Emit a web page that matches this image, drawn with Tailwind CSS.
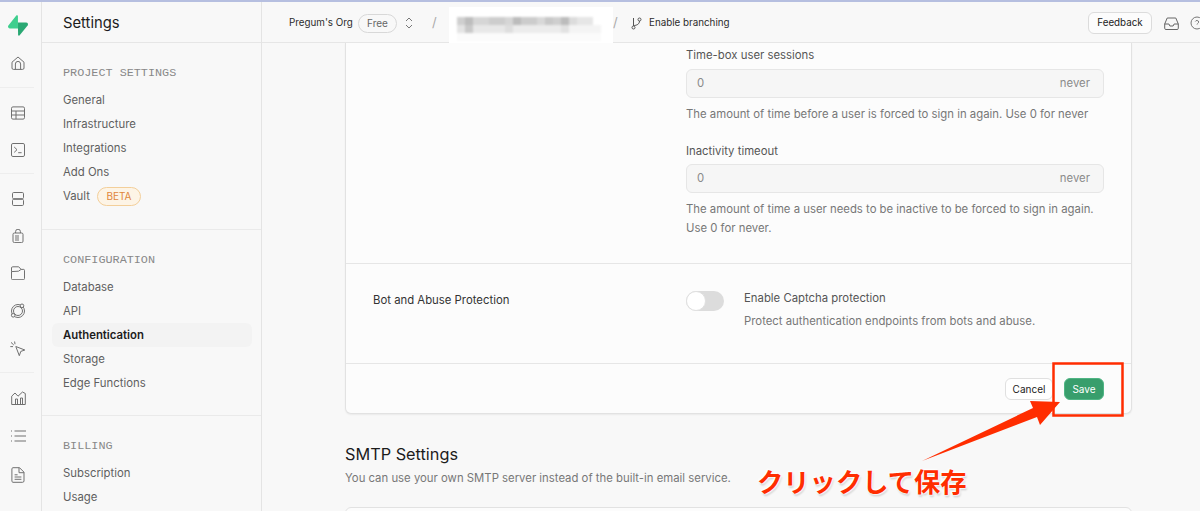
<!doctype html>
<html lang="en">
<head>
<meta charset="utf-8">
<script src="https://cdn.jsdelivr.net/npm/@tailwindcss/browser@4"></script>
<title>Settings</title>
</head>
<body class="bg-[#f8f8f8]">
<div class="relative h-[511px] w-[1200px] overflow-hidden flex flex-col bg-[#f8f8f8] font-['Inter','Liberation_Sans',sans-serif] text-[11.35px] text-[#5f5f5f]">
  <div class="h-[2px] shrink-0 bg-[#b6bfe0]"></div>
  <div class="flex flex-1 min-h-0">
    <!-- rail -->
    <aside class="w-[42px] shrink-0 border-r border-[#e4e4e4] flex flex-col text-[#707070]">
      <div class="h-[86px] pt-[13px] pl-[8px] border-b border-[#eeeeee] mr-[7px]">
        <svg class="w-[20px] h-[21px]" viewBox="0 0 109 113" fill="none"><path d="M63.7076 110.284C60.8481 113.885 55.0502 111.912 54.9813 107.314L53.9738 40.0627L99.1935 40.0627C107.384 40.0627 111.952 49.5228 106.859 55.9374L63.7076 110.284Z" fill="#2aa873"/><path d="M45.317 2.07103C48.1765 -1.53037 53.9745 0.442937 54.0434 5.041L54.4849 72.2922H9.83113C1.64038 72.2922 -2.92775 62.8321 2.1655 56.4175L45.317 2.07103Z" fill="#3ecf8e"/></svg>
        <svg class="w-[14px] h-[14px] mt-[20px] ml-[3px]" viewBox="0 0 14 14" fill="none" stroke="currentColor" stroke-width="1"><path d="M1 6.2 7 1l6 5.2V12a1.4 1.4 0 0 1-1.4 1.4H2.4A1.4 1.4 0 0 1 1 12Z"/><path d="M4.4 13.4V8a2.6 2.6 0 0 1 5.2 0v5.4"/></svg>
      </div>
      <div class="h-[86px] border-b border-[#eeeeee] mr-[7px] pl-[11px] pt-[18px] flex flex-col gap-[23px]">
        <svg class="w-[14px] h-[14px]" viewBox="0 0 14 14" fill="none" stroke="currentColor" stroke-width="1"><rect x=".5" y=".9" width="13" height="12.2" rx="1.4"/><path d="M.5 5h13M.5 9h13M5 5v8.1"/></svg>
        <svg class="w-[14px] h-[14px]" viewBox="0 0 14 14" fill="none" stroke="currentColor" stroke-width="1"><rect x=".5" y=".5" width="13" height="13" rx="1.4"/><path d="m3.2 4 2.8 2.7-2.8 2.7M7.2 9.7h3.4"/></svg>
      </div>
      <div class="h-[199px] border-b border-[#eeeeee] mr-[7px] pl-[11px] pt-[18px] flex flex-col gap-[23px]">
        <svg class="w-[14px] h-[14px]" viewBox="0 0 14 14" fill="none" stroke="currentColor" stroke-width="1"><rect x="1.5" y=".5" width="11" height="6.2" rx="1.2"/><rect x="1.5" y="7.3" width="11" height="6.2" rx="1.2"/></svg>
        <svg class="w-[14px] h-[14px]" viewBox="0 0 14 14" fill="none" stroke="currentColor" stroke-width="1"><rect x="2" y="4" width="10" height="9.6" rx="1.4"/><path d="M4.6 4V2.6a2.4 2.4 0 0 1 4.8 0V4M4 7h4M4 9h4M4 11h4"/></svg>
        <svg class="w-[14px] h-[14px]" viewBox="0 0 14 14" fill="none" stroke="currentColor" stroke-width="1"><path d="M.5 5.6V2a1.2 1.2 0 0 1 1.2-1.2h6l2.4 2.6h2.7a.9.9 0 0 1 .7.9v8.2a1.2 1.2 0 0 1-1.2 1.2H1.700a1.200 1.200 0 0 1-1.200-1.200V5.600l7-.4 2.600-1.800"/></svg>
        <svg class="w-[16px] h-[16px] -ml-[1px]" viewBox="0 0 16 16" fill="none" stroke="currentColor" stroke-width="1"><circle cx="8" cy="8" r="6.500"/><circle cx="8" cy="8" r="4.500"/><circle cx="12" cy="2.800" r="1.800" fill="#f8f8f8"/><circle cx="3.200" cy="12.300" r="1.800" fill="#f8f8f8"/></svg>
        <svg class="w-[16px] h-[16px] -ml-[1px] -mt-[1px]" viewBox="0 0 16 16" fill="none" stroke="currentColor" stroke-width="1"><path d="m5.800 5.500 9 3.500-4 1.400-1.500 4.300ZM3.800 4 1 1.400M5 3.200 4.600.5M3 5.600H.3"/></svg>
      </div>
      <div class="pl-[11px] pt-[18px] flex flex-col gap-[25px]">
        <svg class="w-[15px] h-[14px]" viewBox="0 0 15 14" fill="none" stroke="currentColor" stroke-width="1"><path d="M.7 13.500V5.200L4 2l3 3.200L11.500 1l2.800 1.500v11ZM4.500 13.500V8h2v5.500M9.500 13.500V7h2v6.500"/></svg>
        <svg class="w-[15px] h-[12px]" viewBox="0 0 15 12" fill="none" stroke="currentColor" stroke-width="1"><path d="M3.500 1H15M3.500 6H15M3.500 11H15M0 1h1M0 6h1M0 11h1"/></svg>
        <svg class="w-[14px] h-[16px]" viewBox="0 0 14 16" fill="none" stroke="currentColor" stroke-width="1"><path d="M1.800.7h6.700l4.500 4.500v8.700a1.400 1.400 0 0 1-1.400 1.400H1.800A1.400 1.400 0 0 1 .9 13.900V2a1.400 1.400 0 0 1 .9-1.300ZM8 .7v5h5M3.600 7.800h3M3.600 10h6.800M3.600 12.300h6.800"/></svg>
      </div>
    </aside>

    <!-- sidebar -->
    <aside class="w-[220px] shrink-0 border-r border-[#e4e4e4] flex flex-col">
      <div class="h-[41px] shrink-0 border-b border-[#e6e6e6] pl-[21px] pt-[2px] flex items-center text-[14.800px] text-[#1c1c1c]">Settings</div>
      <div class="h-[187px] shrink-0 border-b border-[#eaeaea] pl-[21px] pt-[22px]">
        <h3 class="font-['Liberation_Mono',monospace] text-[11.800px] leading-[16px] text-[#888888]">PROJECT SETTINGS</h3>
        <ul class="mt-[7px] flex flex-col [&>li]:h-[24px] [&>li]:leading-[24px]">
          <li>General</li><li>Infrastructure</li><li>Integrations</li><li>Add Ons</li>
          <li class="flex items-center gap-[7px]">Vault <span class="h-[19px] w-[44px] rounded-full border border-[#f3cf9a] bg-[#fdf4e6] text-[#e0863a] text-[10px] leading-[17px] text-center">BETA</span></li>
        </ul>
      </div>
      <div class="h-[186px] shrink-0 border-b border-[#eaeaea] pl-[10px] pr-[9px] pt-[22px]">
        <h3 class="pl-[11px] font-['Liberation_Mono',monospace] text-[11.800px] leading-[16px] text-[#888888]">CONFIGURATION</h3>
        <ul class="mt-[7px] flex flex-col [&>li]:h-[24px] [&>li]:leading-[24px] [&>li]:pl-[11px] [&>li]:rounded-md">
          <li>Database</li><li>API</li>
          <li class="bg-[#f3f3f3] font-semibold text-[#1c1c1c]">Authentication</li>
          <li>Storage</li><li>Edge Functions</li>
        </ul>
      </div>
      <div class="pl-[21px] pt-[22px]">
        <h3 class="font-['Liberation_Mono',monospace] text-[11.800px] leading-[16px] text-[#888888]">BILLING</h3>
        <ul class="mt-[7px] flex flex-col [&>li]:h-[24px] [&>li]:leading-[24px]">
          <li>Subscription</li><li>Usage</li>
        </ul>
      </div>
    </aside>

    <!-- main -->
    <main class="flex-1 min-w-0 flex flex-col">
      <header class="h-[41px] shrink-0 border-b border-[#e6e6e6] flex items-center pl-[27px] pt-[2px] text-[#2b2b2b] text-[9.800px] whitespace-nowrap">
        <span class="w-[63px] shrink-0">Pregum's Org</span>
        <span class="ml-[6px] h-[19px] w-[39px] rounded-full border border-[#d8d8d8] text-center leading-[17px] text-[#666666] text-[10px]">Free</span>
        <svg class="ml-[7px] w-[10px] h-[14px] text-[#777777] shrink-0" viewBox="0 0 10 14" fill="none" stroke="currentColor" stroke-width="1"><path d="m2 5 3-3 3 3M2 9l3 3 3-3"/></svg>
        <span class="ml-[18px] w-[6px] text-[#aaaaaa] text-[13px]">/</span>
        <div class="ml-[11px] self-start mt-[3px] h-[36px] w-[164px] bg-white pt-[10px] pl-[8px] overflow-hidden shrink-0 relative">
          <svg class="blur-[1.200px]" width="150" height="24" viewBox="0 0 150 24">
            <g><rect x="0" y="0" width="8" height="8" fill="#cfcfcf"/><rect x="8" width="8" height="8" fill="#bdbdbd"/><rect x="16" width="16" height="8" fill="#d6d6d6"/><rect x="32" width="16" height="8" fill="#cdcdcd"/><rect x="48" width="8" height="8" fill="#d6d6d6"/><rect x="56" width="8" height="8" fill="#bcbcbc"/><rect x="64" width="16" height="8" fill="#cccccc"/><rect x="80" width="8" height="8" fill="#d8d8d8"/><rect x="88" width="8" height="8" fill="#c8c8c8"/><rect x="96" width="8" height="8" fill="#cfcfcf"/><rect x="104" width="8" height="8" fill="#bcbcbc"/><rect x="112" width="8" height="8" fill="#dcdcdc"/><rect x="120" width="16" height="8" fill="#e6e6e6"/></g>
            <g><rect x="0" y="8" width="8" height="8" fill="#e4e4e4"/><rect x="8" y="8" width="8" height="8" fill="#c9c9c9"/><rect x="16" y="8" width="32" height="8" fill="#e8e8e8"/><rect x="48" y="8" width="8" height="8" fill="#dedede"/><rect x="56" y="8" width="48" height="8" fill="#ececec"/><rect x="104" y="8" width="8" height="8" fill="#e2e2e2"/><rect x="112" y="8" width="32" height="8" fill="#f4f4f4"/></g>
            <g><rect x="0" y="16" width="144" height="8" fill="#fbfbfb"/></g>
          </svg>
        </div>
        <span class="w-[6px] text-[#aaaaaa] text-[13px]">/</span>
        <svg class="ml-[12px] w-[11px] h-[13px] text-[#555555] shrink-0" viewBox="0 0 11 13" fill="none" stroke="currentColor" stroke-width="1"><circle cx="2.500" cy="10.500" r="1.500"/><circle cx="8.500" cy="2.500" r="1.500"/><path d="M2.500 1v8M2.500 8.500c3.500 0 6-1.500 6-4.500"/></svg>
        <span class="ml-[7px]">Enable branching</span>
        <button class="ml-auto h-[22px] w-[64px] rounded-md border border-[#dcdcdc] bg-[#fcfcfc] text-[#222222] text-[9.800px] shrink-0">Feedback</button>
        <svg class="ml-[12px] w-[15px] h-[13px] text-[#666666] shrink-0" viewBox="0 0 15 13" fill="none" stroke="currentColor" stroke-width="1"><path d="M.7 7 3.200 1h8.600l2.500 6v4.300a1.200 1.200 0 0 1-1.200 1.200H1.900a1.200 1.200 0 0 1-1.200-1.200ZM.7 7h4.200l1 2h3.200l1-2h4.200"/></svg>
        <svg class="ml-[11px] w-[14px] h-[14px] text-[#777777] shrink-0 -mr-[4px]" viewBox="0 0 14 14" fill="none" stroke="currentColor" stroke-width="1"><circle cx="7" cy="7" r="6"/><path d="M5.300 5.500a1.800 1.800 0 0 1 3.400.5c0 1.200-1.700 1.500-1.700 2.500"/></svg>
      </header>

      <div class="flex-1 min-h-0 overflow-hidden pl-[83px] pr-[68px]">
        <section class="rounded-b-md border border-t-0 border-[#e2e2e2] bg-[#fcfcfc] shadow-[0_1px_2px_rgba(0,0,0,0.06)]">
          <div class="h-[221px] border-b border-[#e6e6e6] pl-[340px] pr-[27px] pt-[3px]">
            <label class="block leading-[18px] text-[#555555]">Time-box user sessions</label>
            <div class="mt-[5px] h-[29px] rounded-md border border-[#e6e6e6] bg-[#f6f6f6] flex justify-between items-center pl-[10px] pr-[13px] text-[#8a8a8a]"><span>0</span><span>never</span></div>
            <p class="mt-[7px] leading-[18px] text-[#777777]">The amount of time before a user is forced to sign in again. Use 0 for never</p>
            <label class="block mt-[19px] leading-[18px] text-[#555555]">Inactivity timeout</label>
            <div class="mt-[4px] h-[29px] rounded-md border border-[#e6e6e6] bg-[#f6f6f6] flex justify-between items-center pl-[10px] pr-[13px] text-[#8a8a8a]"><span>0</span><span>never</span></div>
            <p class="mt-[7px] leading-[19px] text-[#777777]">The amount of time a user needs to be inactive to be forced to sign in again. Use 0 for never.</p>
          </div>
          <div class="h-[100px] border-b border-[#e6e6e6] flex pl-[27px] pt-[27px]">
            <div class="w-[313px] leading-[18px] text-[#333333]">Bot and Abuse Protection</div>
            <span class="w-[38px] h-[20px] rounded-full bg-[#dcdcdc] relative shrink-0 block"><span class="absolute left-0 top-0 w-[20px] h-[20px] rounded-full bg-white border border-[#e0e0e0]"></span></span>
            <div class="ml-[20px] -mt-[2px]">
              <div class="leading-[18px] text-[#555555]">Enable Captcha protection</div>
              <div class="mt-[5px] leading-[18px] text-[#777777]">Protect authentication endpoints from bots and abuse.</div>
            </div>
          </div>
          <div class="h-[49px] flex items-start justify-end gap-[11px] pr-[27px] pt-[14px]">
            <button class="h-[22px] w-[48px] rounded-md border border-[#e0e0e0] bg-white text-[#222222] text-[10px]">Cancel</button>
            <button class="h-[22px] w-[40px] rounded-md border border-[#4fb584] bg-[#389e6c] text-white text-[10px]">Save</button>
          </div>
        </section>
        <h2 class="mt-[29px] text-[16.300px] leading-[22px] text-[#1c1c1c]">SMTP Settings</h2>
        <p class="mt-[4px] leading-[18px] text-[#777777]">You can use your own SMTP server instead of the built-in email service.</p>
        <div class="mt-[20px] h-[40px] rounded-md border border-[#e2e2e2] bg-[#fcfcfc]"></div>
      </div>
    </main>
  </div>

  <!-- annotation -->
  <svg class="absolute left-0 top-0 pointer-events-none" width="1200" height="511" viewBox="0 0 1200 511" fill="none">
    <polygon points="922,461 1033,408 1030,401 1060,402 1040,425 1037,417" fill="#ff2d00"/>
    <rect x="1053.500" y="363.500" width="69" height="52" stroke="#ff2d00" stroke-width="2.500"/>
  </svg>
  <div class="absolute left-[757px] top-[463px] text-[26.300px] leading-[36px] font-bold text-[#ff2d00] whitespace-nowrap font-['Noto_Sans_CJK_JP',sans-serif] [text-shadow:0_0_2px_#fff,1px_1px_2px_#fff,-1px_-1px_2px_#fff,1px_2px_2px_#bbb]" lang="ja">クリックして保存</div>
</div>
</body>
</html>
